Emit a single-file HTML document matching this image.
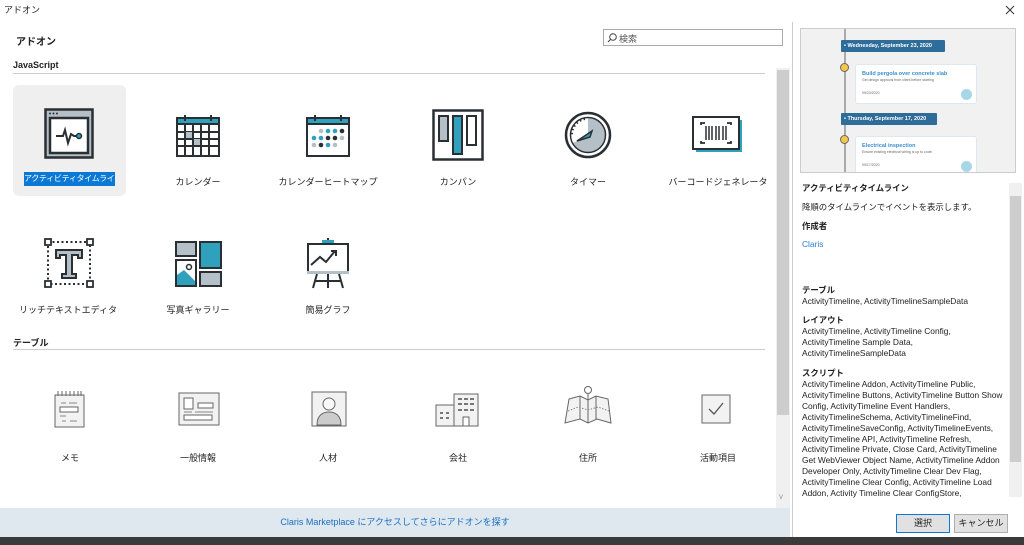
<!DOCTYPE html>
<html><head><meta charset="utf-8"><style>
*{margin:0;padding:0;box-sizing:border-box}
body{width:1024px;height:545px;background:#fff;font-family:"Liberation Sans","Noto Sans CJK JP",sans-serif;color:#222;position:relative;overflow:hidden;font-size:9px}
.a{position:absolute}
.lbl{position:absolute;width:130px;text-align:center;font-size:9px;color:#222;white-space:nowrap}
.hdr{font-size:9px;font-weight:bold}
.rt{font-size:8.4px;line-height:10.9px;color:#222}
</style></head><body>
<div class="a" style="left:4px;top:3px;font-size:9px">アドオン</div>
<svg class="a" style="left:1005px;top:5px" width="10" height="10"><path d="M1 1L9 9M9 1L1 9" stroke="#333" stroke-width="1"/></svg>
<div class="a" style="left:16px;top:33px;font-size:10px;font-weight:bold">アドオン</div>
<div class="a" style="left:603px;top:29px;width:180px;height:17px;border:1px solid #aaa;background:#fff"></div>
<svg class="a" style="left:607px;top:32px" width="11" height="11"><circle cx="6" cy="5" r="3.3" fill="none" stroke="#444" stroke-width="1"/><path d="M3.6 7.4L1 10" stroke="#444"/></svg>
<div class="a" style="left:619px;top:32px;font-size:9px;color:#555">検索</div>
<div class="a hdr" style="left:13px;top:60px">JavaScript</div>
<div class="a" style="left:13px;top:73px;width:752px;height:1px;background:#ccc"></div>
<div class="a" style="left:13px;top:85px;width:113px;height:111px;background:#efefef;border-radius:6px"></div>
<svg class="a" style="left:44px;top:108px" width="50" height="52"><rect x="1.5" y="1.5" width="47" height="48" fill="#b5bfc7" stroke="#2a2f33" stroke-width="2.5"/><rect x="6" y="10" width="38" height="35" fill="#fff" stroke="#2a2f33" stroke-width="2.5"/><circle cx="6" cy="5.5" r="1" fill="#2a2f33"/><circle cx="9.5" cy="5.5" r="1" fill="#2a2f33"/><circle cx="13" cy="5.5" r="1" fill="#2a2f33"/><path d="M12 28H19L21 22L24 35L27 26L30 28H33" fill="none" stroke="#2a2f33" stroke-width="2"/><circle cx="35" cy="28" r="2.5" fill="#2fa1bd" stroke="#2a2f33" stroke-width="1.5"/></svg>
<div class="a" style="left:24px;top:172px;width:91px;height:14px;background:#0a78d4;color:#fff;font-size:8px;text-align:center;line-height:14px;white-space:nowrap;overflow:hidden;letter-spacing:-0.3px">アクティビティタイムライン</div>
<svg class="a" style="left:176px;top:113px" width="44" height="44"><rect x="1" y="5" width="42" height="38" fill="#fff" stroke="#2a2f33" stroke-width="2"/><rect x="1" y="5" width="42" height="6" fill="#2fa1bd" stroke="#2a2f33" stroke-width="2"/><path d="M9 2V8M35 2V8" stroke="#2a2f33" stroke-width="2"/><path d="M1 19H43M1 26H43M1 33H43M9 11V43M17 11V43M25 11V43M33 11V43" stroke="#2a2f33" stroke-width="2"/><rect x="10" y="19" width="6" height="6" fill="#b5bfc7"/><rect x="18" y="26" width="6" height="6" fill="#b5bfc7"/></svg>
<div class="lbl" style="left:133px;top:175px">カレンダー</div>
<svg class="a" style="left:306px;top:113px" width="44" height="44"><rect x="1" y="5" width="42" height="38" fill="#fff" stroke="#2a2f33" stroke-width="2"/><rect x="1" y="5" width="42" height="6" fill="#2fa1bd" stroke="#2a2f33" stroke-width="2"/><path d="M9 2V8M35 2V8" stroke="#2a2f33" stroke-width="2"/><circle cx="15" cy="18" r="2.3" fill="#b5bfc7"/><circle cx="22" cy="18" r="2.3" fill="#2fa1bd"/><circle cx="29" cy="18" r="2.3" fill="#2fa1bd"/><circle cx="36" cy="18" r="2.3" fill="#2a2f33"/><circle cx="8" cy="25" r="2.3" fill="#2fa1bd"/><circle cx="15" cy="25" r="2.3" fill="#2fa1bd"/><circle cx="22" cy="25" r="2.3" fill="#2a2f33"/><circle cx="29" cy="25" r="2.3" fill="#2a2f33"/><circle cx="36" cy="25" r="2.3" fill="#b5bfc7"/><circle cx="8" cy="32" r="2.3" fill="#b5bfc7"/><circle cx="15" cy="32" r="2.3" fill="#2a2f33"/><circle cx="22" cy="32" r="2.3" fill="#2fa1bd"/><circle cx="29" cy="32" r="2.3" fill="#b5bfc7"/></svg>
<div class="lbl" style="left:263px;top:175px">カレンダーヒートマップ</div>
<svg class="a" style="left:432px;top:109px" width="52" height="52"><rect x="1.5" y="1.5" width="49" height="49" fill="#fff" stroke="#2a2f33" stroke-width="2.5"/><rect x="7" y="7" width="9" height="25" fill="#b5bfc7" stroke="#2a2f33" stroke-width="2"/><rect x="21" y="7" width="9" height="38" fill="#2fa1bd" stroke="#2a2f33" stroke-width="2"/><rect x="35" y="7" width="9" height="29" fill="#fff" stroke="#2a2f33" stroke-width="2"/></svg>
<div class="lbl" style="left:393px;top:175px">カンパン</div>
<svg class="a" style="left:564px;top:111px" width="48" height="48"><circle cx="24" cy="24" r="22" fill="#fff" stroke="#2a2f33" stroke-width="2.5"/><path d="M24 7A17 17 0 1 1 9 32L24 24Z" fill="#b5bfc7"/><circle cx="24" cy="24" r="17.5" fill="none" stroke="#2a2f33" stroke-width="1.5"/><path d="M13 30L28 20L26 26Z" fill="#2fa1bd" stroke="#2a2f33" stroke-width="1.5"/><path d="M21 8A16 16 0 0 0 8 24" stroke="#2a2f33" stroke-width="2" stroke-dasharray="1.5 2.5" fill="none"/></svg>
<div class="lbl" style="left:523px;top:175px">タイマー</div>
<svg class="a" style="left:692px;top:116px" width="52" height="38"><rect x="4" y="4" width="46" height="32" fill="#2fa1bd"/><rect x="1" y="1" width="46" height="32" fill="#fff" stroke="#2a2f33" stroke-width="2"/><path d="M9 9V7H13M35 7H39V9M9 25V27H13M35 27H39V25" fill="none" stroke="#2a2f33" stroke-width="1.8"/><path d="M14 10V24M17 10V24M20 10V24M24 10V24M27 10V24M31 10V24M34 10V24" stroke="#2a2f33" stroke-width="1.5"/></svg>
<div class="lbl" style="left:653px;top:175px">バーコードジェネレータ</div>
<svg class="a" style="left:44px;top:238px" width="50" height="50"><rect x="4" y="4" width="42" height="42" fill="none" stroke="#2a2f33" stroke-width="2" stroke-dasharray="2 2.5"/><rect x="1" y="1" width="6" height="6" fill="#fff" stroke="#2a2f33" stroke-width="1.8"/><rect x="43" y="1" width="6" height="6" fill="#fff" stroke="#2a2f33" stroke-width="1.8"/><rect x="1" y="43" width="6" height="6" fill="#fff" stroke="#2a2f33" stroke-width="1.8"/><rect x="43" y="43" width="6" height="6" fill="#fff" stroke="#2a2f33" stroke-width="1.8"/><path d="M12 12H38V20H34V17H28V36H32V40H18V36H22V17H16V20H12Z" fill="#b5bfc7" stroke="#2a2f33" stroke-width="2"/></svg>
<div class="lbl" style="left:3px;top:303px">リッチテキストエディタ</div>
<svg class="a" style="left:175px;top:241px" width="47" height="46"><rect x="1" y="1" width="20" height="14" fill="#b5bfc7" stroke="#2a2f33" stroke-width="2"/><rect x="25" y="1" width="21" height="26" fill="#2fa1bd" stroke="#2a2f33" stroke-width="2"/><rect x="1" y="19" width="20" height="26" fill="#fff" stroke="#2a2f33" stroke-width="2"/><path d="M2 44V34L9 29L20 40V44Z" fill="#2fa1bd"/><circle cx="14" cy="26" r="2.5" fill="none" stroke="#2a2f33" stroke-width="1.5"/><rect x="25" y="31" width="21" height="14" fill="#b5bfc7" stroke="#2a2f33" stroke-width="2"/></svg>
<div class="lbl" style="left:133px;top:303px">写真ギャラリー</div>
<svg class="a" style="left:307px;top:237px" width="42" height="52"><rect x="15" y="3" width="12" height="5" fill="#2fa1bd"/><path d="M21 1V3" stroke="#2a2f33" stroke-width="2"/><rect x="1" y="7" width="40" height="28" fill="#fff" stroke="#2a2f33" stroke-width="2"/><rect x="0" y="34" width="42" height="3" fill="#b5bfc7"/><path d="M4 28L13 20L19 25L28 14M24 14H29V19" fill="none" stroke="#2a2f33" stroke-width="2"/><path d="M10 37L6 51M32 37L36 51M21 37V51M8 44H34" stroke="#2a2f33" stroke-width="2"/></svg>
<div class="lbl" style="left:263px;top:303px">簡易グラフ</div>
<div class="a hdr" style="left:13px;top:336px">テーブル</div>
<div class="a" style="left:13px;top:349px;width:752px;height:1px;background:#ccc"></div>
<svg class="a" style="left:52px;top:390px" width="34" height="38"><rect x="3" y="5" width="29" height="32" fill="#f2f2f2" stroke="#666" stroke-width="1"/><path d="M6 1V6M10 1V6M14 1V6M18 1V6M22 1V6M26 1V6M29 1V6" stroke="#666"/><path d="M9 13H14M17 13H25M8 26H14M18 31H25M10 31H14" stroke="#888"/><rect x="8" y="17" width="18" height="5" fill="#fff" stroke="#666"/></svg>
<div class="lbl" style="left:5px;top:451px">メモ</div>
<svg class="a" style="left:178px;top:392px" width="42" height="34"><rect x="1" y="1" width="40" height="32" fill="#f2f2f2" stroke="#666"/><rect x="6" y="6" width="9" height="11" fill="#fff" stroke="#666"/><rect x="20" y="11" width="15" height="5" fill="#fff" stroke="#666"/><path d="M6 20H14M17 20H35" stroke="#888"/><rect x="6" y="23" width="28" height="5" fill="#fff" stroke="#666"/></svg>
<div class="lbl" style="left:133px;top:451px">一般情報</div>
<svg class="a" style="left:311px;top:391px" width="36" height="36"><rect x="1" y="1" width="34" height="34" fill="#f2f2f2" stroke="#666"/><circle cx="18" cy="13" r="6" fill="#f8f8f8" stroke="#666"/><path d="M6 34C6 24 12 21 18 21C24 21 30 24 30 34Z" fill="#ccc" stroke="#666"/></svg>
<div class="lbl" style="left:263px;top:451px">人材</div>
<svg class="a" style="left:434px;top:393px" width="48" height="34"><rect x="20" y="1" width="24" height="32" fill="#f2f2f2" stroke="#666"/><rect x="2" y="12" width="18" height="21" fill="#f2f2f2" stroke="#666"/><path d="M24 6h4M30 6h4M36 6h4M24 11h4M30 11h4M36 11h4M24 17h4M30 17h4M36 17h4M6 20h3M12 20h3M6 25h3M12 25h3" stroke="#777" stroke-width="2"/><rect x="29" y="24" width="6" height="9" fill="#fff" stroke="#666"/></svg>
<div class="lbl" style="left:393px;top:451px">会社</div>
<svg class="a" style="left:563px;top:385px" width="50" height="44"><path d="M6 14L17 11L25 15L33 11L45 14L48 38L34 34L25 38L17 34L2 38Z" fill="#f2f2f2" stroke="#666"/><path d="M17 11V34M25 15V38M33 11V34" stroke="#666"/><path d="M5 26L15 22L25 25L35 22L46 26" stroke="#888" stroke-dasharray="1.5 1.5" fill="none"/><circle cx="25" cy="5" r="3.5" fill="#fff" stroke="#666"/><path d="M25 9V18" stroke="#666"/></svg>
<div class="lbl" style="left:523px;top:451px">住所</div>
<svg class="a" style="left:701px;top:394px" width="30" height="30"><rect x="1" y="1" width="28" height="28" fill="#f2f2f2" stroke="#666"/><path d="M8 15L13 20L22 9" fill="none" stroke="#555" stroke-width="1.3"/></svg>
<div class="lbl" style="left:653px;top:451px">活動項目</div>
<div class="a" style="left:776px;top:68px;width:14px;height:440px;background:#f0f0f0"></div>
<div class="a" style="left:777px;top:70px;width:12px;height:345px;background:#cdcdcd"></div>
<div class="a" style="left:779px;top:492px;font-size:8px;color:#999">v</div>
<div class="a" style="left:0;top:508px;width:790px;height:29px;background:#dfe8ef;text-align:center;line-height:29px;color:#1a6fc0;font-size:9px">Claris Marketplace にアクセスしてさらにアドオンを探す</div>
<div class="a" style="left:0;top:537px;width:1024px;height:8px;background:#3a3a3a"></div>
<div class="a" style="left:792px;top:22px;width:1px;height:515px;background:#ccc"></div>
<div class="a" style="left:800px;top:28px;width:216px;height:145px;background:#f1f1f1;border:1px solid #ccc;overflow:hidden">
<div class="a" style="left:43px;top:0;width:2px;height:145px;background:#aaa"></div>
<div class="a" style="left:40px;top:11px;width:104px;height:12px;background:#2e6c99;color:#fff;font-size:5.5px;font-weight:bold;line-height:12px;padding-left:3px;border-radius:1px;white-space:nowrap">• Wednesday, September 23, 2020</div>
<div class="a" style="left:39px;top:34px;width:9px;height:9px;border-radius:50%;background:#f5c84c;border:1px solid #666"></div>
<div class="a" style="left:54px;top:35px;width:122px;height:40px;background:#fff;border:1px solid #dde8f3;border-radius:3px"><div style="color:#3a8fd0;font-size:5.5px;font-weight:bold;margin:6px 0 0 6px">Build pergola over concrete slab</div><div style="font-size:3.5px;color:#666;margin:1px 0 0 6px">Get design approval from client before starting</div><div style="font-size:3.5px;color:#666;margin:9px 0 0 6px">09/23/2020</div><div class="a" style="right:4px;top:24px;width:11px;height:11px;border-radius:50%;background:#a8d8e8"></div></div>
<div class="a" style="left:40px;top:84px;width:96px;height:12px;background:#2e6c99;color:#fff;font-size:5.5px;font-weight:bold;line-height:12px;padding-left:3px;border-radius:1px;white-space:nowrap">• Thursday, September 17, 2020</div>
<div class="a" style="left:39px;top:106px;width:9px;height:9px;border-radius:50%;background:#f5c84c;border:1px solid #666"></div>
<div class="a" style="left:54px;top:107px;width:122px;height:40px;background:#fff;border:1px solid #dde8f3;border-radius:3px"><div style="color:#3a8fd0;font-size:5.5px;font-weight:bold;margin:6px 0 0 6px">Electrical inspection</div><div style="font-size:3.5px;color:#666;margin:1px 0 0 6px">Ensure existing electrical wiring is up to code.</div><div style="font-size:3.5px;color:#666;margin:9px 0 0 6px">09/17/2020</div><div class="a" style="right:4px;top:24px;width:11px;height:11px;border-radius:50%;background:#a8d8e8"></div></div>
</div>
<div class="a" style="left:1009px;top:183px;width:13px;height:314px;background:#f0f0f0"></div>
<div class="a" style="left:1010px;top:196px;width:11px;height:266px;background:#cdcdcd"></div>
<div class="a" style="left:802px;top:183px;width:205px">
<div class="rt" style="font-weight:bold">アクティビティタイムライン</div>
<div class="rt" style="margin-top:8px">降順のタイムラインでイベントを表示します。</div>
<div class="rt" style="font-weight:bold;margin-top:8px">作成者</div>
<div class="rt" style="color:#2a7dd0;margin-top:7px">Claris</div>
<div class="rt" style="font-weight:bold;margin-top:35px">テーブル</div>
<div class="rt">ActivityTimeline, ActivityTimelineSampleData</div>
<div class="rt" style="font-weight:bold;margin-top:9px">レイアウト</div>
<div class="rt">ActivityTimeline, ActivityTimeline Config,<br>ActivityTimeline Sample Data,<br>ActivityTimelineSampleData</div>
<div class="rt" style="font-weight:bold;margin-top:9px">スクリプト</div>
<div class="rt">ActivityTimeline Addon, ActivityTimeline Public, ActivityTimeline Buttons, ActivityTimeline Button Show Config, ActivityTimeline Event Handlers, ActivityTimelineSchema, ActivityTimelineFind, ActivityTimelineSaveConfig, ActivityTimelineEvents, ActivityTimeline API, ActivityTimeline Refresh, ActivityTimeline Private, Close Card, ActivityTimeline Get WebViewer Object Name, ActivityTimeline Addon Developer Only, ActivityTimeline Clear Dev Flag, ActivityTimeline Clear Config, ActivityTimeline Load Addon, Activity Timeline Clear ConfigStore,</div>
</div>
<div class="a" style="left:896px;top:514px;width:54px;height:19px;background:#e1e1e1;border:1px solid #0a78d4;text-align:center;line-height:17px;font-size:9px">選択</div>
<div class="a" style="left:954px;top:514px;width:54px;height:19px;background:#e1e1e1;border:1px solid #adadad;text-align:center;line-height:17px;font-size:9px">キャンセル</div>
</body></html>
